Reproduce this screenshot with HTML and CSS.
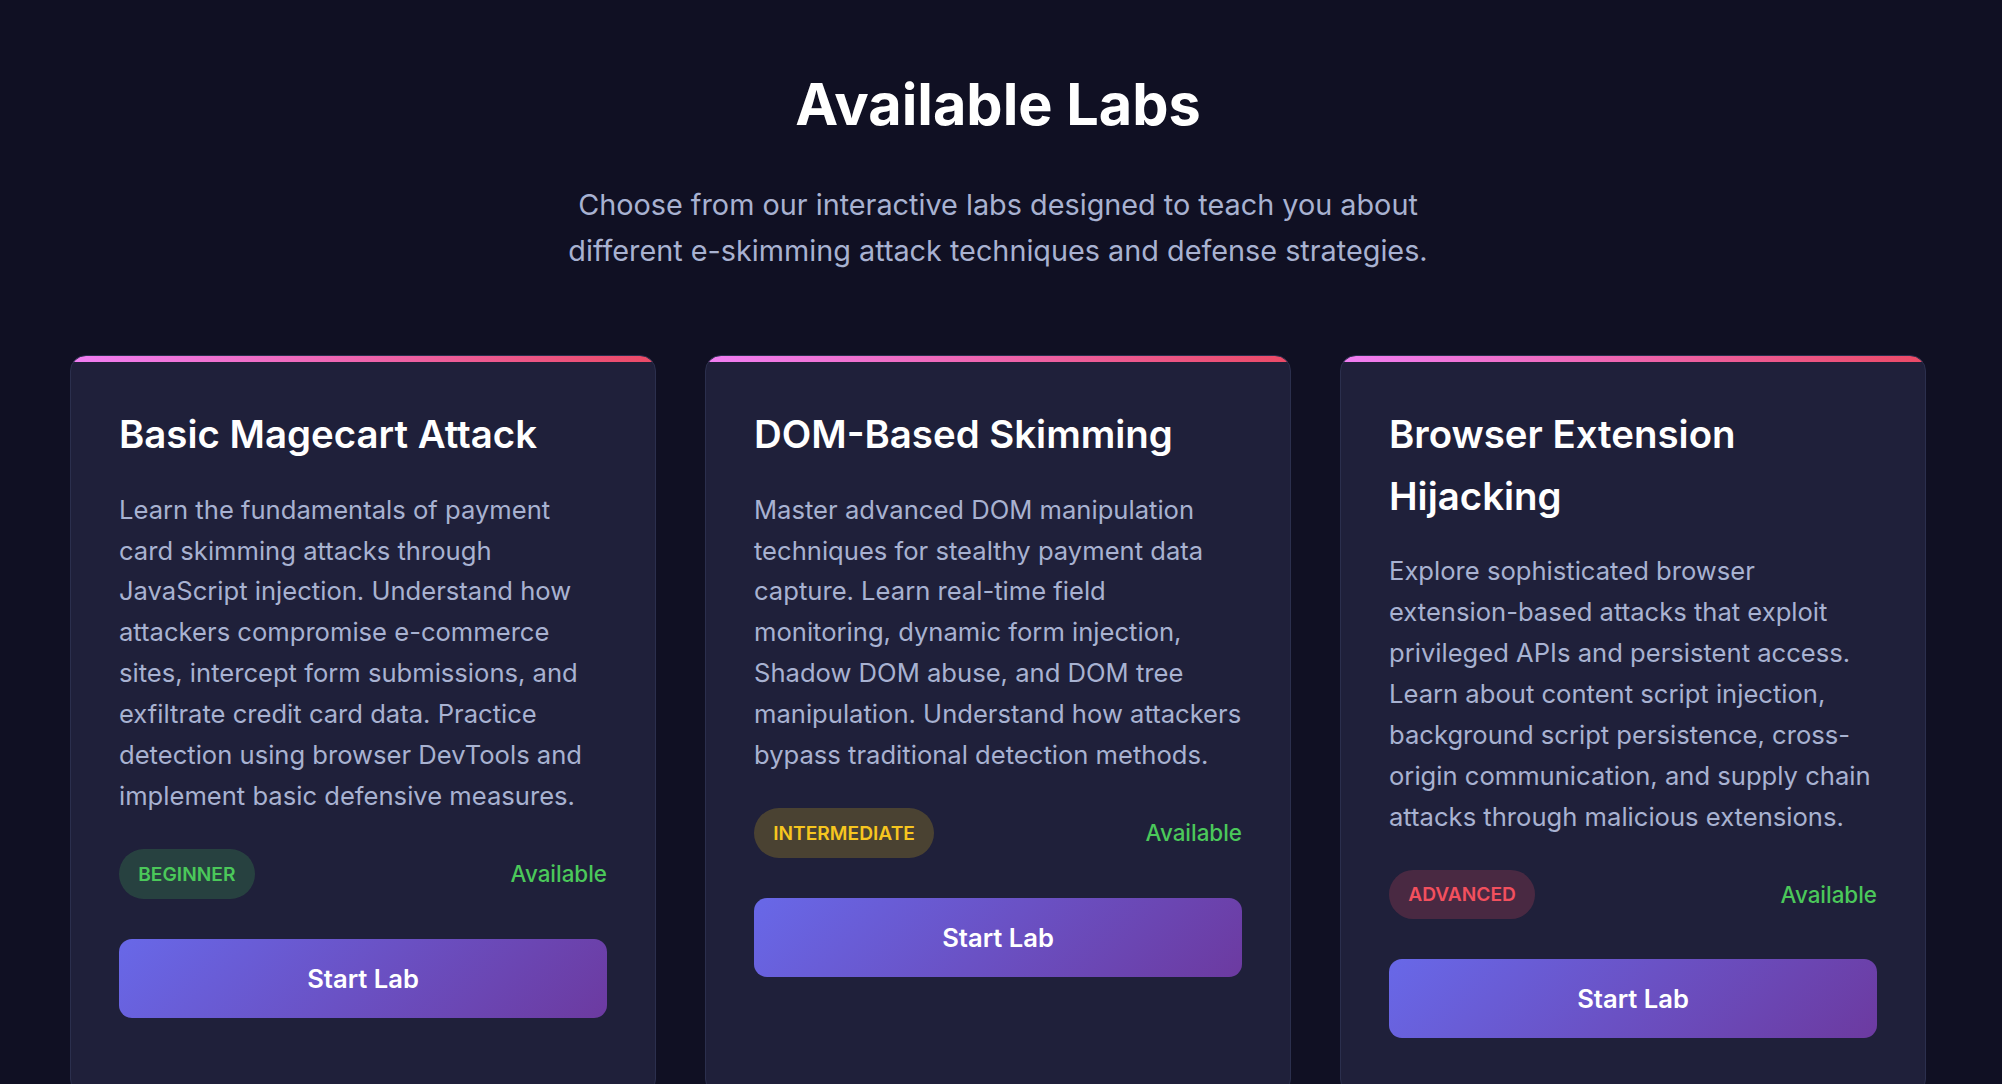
FILE: index.html
```html
<!DOCTYPE html>
<html lang="en">
<head>
<meta charset="utf-8">
<title>Available Labs</title>
<link rel="stylesheet" href="styles.css">
</head>
<body>
<main class="labs">
  <header class="labs-head">
    <h2 class="labs-title">Available Labs</h2>
    <p class="labs-sub">Choose from our interactive labs designed to teach you about different e-skimming attack techniques and defense strategies.</p>
  </header>
  <div class="lab-grid">
    <article class="lab-card">
      <h3 class="lab-name">Basic Magecart Attack</h3>
      <p class="lab-desc">Learn the fundamentals of payment card skimming attacks through JavaScript injection. Understand how attackers compromise e-commerce sites, intercept form submissions, and exfiltrate credit card data. Practice detection using browser DevTools and implement basic defensive measures.</p>
      <div class="lab-meta">
        <span class="badge badge-beginner">Beginner</span>
        <span class="lab-status">Available</span>
      </div>
      <button class="lab-btn" type="button">Start Lab</button>
    </article>
    <article class="lab-card">
      <h3 class="lab-name">DOM-Based Skimming</h3>
      <p class="lab-desc">Master advanced DOM manipulation techniques for stealthy payment data capture. Learn real-time field monitoring, dynamic form injection, Shadow DOM abuse, and DOM tree manipulation. Understand how attackers bypass traditional detection methods.</p>
      <div class="lab-meta">
        <span class="badge badge-intermediate">Intermediate</span>
        <span class="lab-status">Available</span>
      </div>
      <button class="lab-btn" type="button">Start Lab</button>
    </article>
    <article class="lab-card">
      <h3 class="lab-name">Browser Extension Hijacking</h3>
      <p class="lab-desc">Explore sophisticated browser extension-based attacks that exploit privileged APIs and persistent access. Learn about content script injection, background script persistence, cross-origin communication, and supply chain attacks through malicious extensions.</p>
      <div class="lab-meta">
        <span class="badge badge-advanced">Advanced</span>
        <span class="lab-status">Available</span>
      </div>
      <button class="lab-btn" type="button">Start Lab</button>
    </article>
  </div>
</main>
</body>
</html>
```

FILE: styles.css
```css
* {
  box-sizing: border-box;
}

html, body {
  margin: 0;
  padding: 0;
  background: #101023;
}

body {
  font-family: "Inter", "Noto Sans", "Liberation Sans", sans-serif;
  color: #a8b2d1;
  overflow: hidden;
}

.labs {
  padding: 70px 76px 0 70px;
}

.labs-head {
  display: flex;
  flex-direction: column;
  align-items: center;
  text-align: center;
}

.labs-title {
  margin: 0 0 43px;
  font-size: 57.6px;
  line-height: 69px;
  font-weight: 700;
  color: #ffffff;
}

.labs-sub {
  margin: 0 0 81px;
  max-width: 900px;
  font-size: 28.8px;
  line-height: 1.6;
  color: #a8b2d1;
}

.lab-grid {
  display: grid;
  grid-template-columns: repeat(3, 1fr);
  gap: 49px;
}

.lab-card {
  padding: 48px;
  border: 1px solid #2b2f4d;
  border-radius: 16px;
  background:
    linear-gradient(90deg, #f07ef3 0%, #eb4a66 100%) top left / 100% 7px no-repeat,
    #1f203a;
  background-origin: border-box;
  background-clip: border-box;
  height: 740px;
}

.lab-name {
  margin: 0 0 24px;
  font-size: 38.4px;
  line-height: 1.6;
  font-weight: 600;
  color: #ffffff;
}

.lab-desc {
  margin: 0 0 32px;
  font-size: 25.6px;
  line-height: 1.6;
  color: #a8b2d1;
}

.lab-meta {
  display: flex;
  align-items: center;
  justify-content: space-between;
  margin-bottom: 40px;
}

.badge {
  display: inline-block;
  padding: 9.6px 19.2px;
  border-radius: 999px;
  font-size: 19.2px;
  line-height: 1.6;
  font-weight: 600;
  text-transform: uppercase;
}

.badge-beginner {
  background: rgba(75, 200, 90, 0.2);
  color: #4bc85a;
}

.badge-intermediate {
  background: rgba(250, 204, 21, 0.2);
  color: #f7c61f;
}

.badge-advanced {
  background: rgba(245, 80, 100, 0.2);
  color: #f2505e;
}

.lab-status {
  font-size: 22.4px;
  line-height: 1.6;
  font-weight: 500;
  color: #4bc85a;
}

.lab-btn {
  display: block;
  width: 100%;
  padding: 19px 0;
  border: none;
  border-radius: 13px;
  background: linear-gradient(135deg, #6868e8 0%, #6c3aa0 100%);
  color: #ffffff;
  font-family: inherit;
  font-size: 25.6px;
  line-height: 41px;
  font-weight: 600;
  cursor: pointer;
}
```
